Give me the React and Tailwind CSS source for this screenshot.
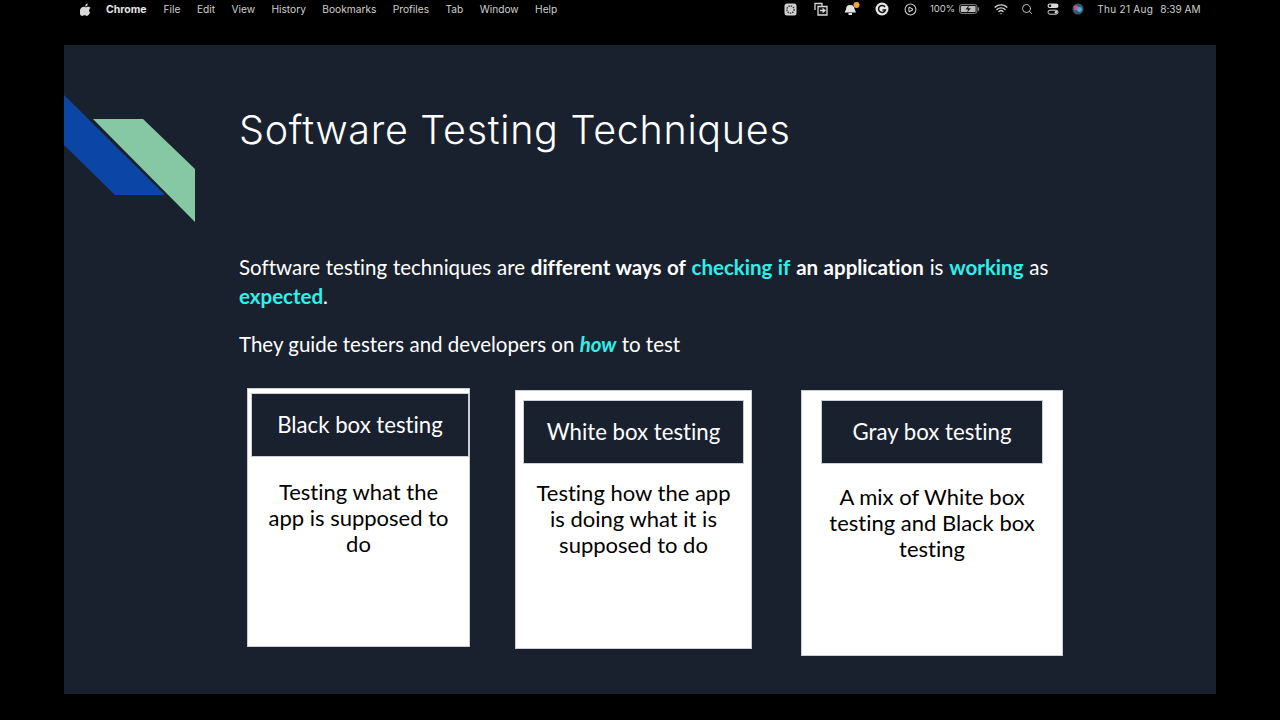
import { Search, Wifi, CirclePlay } from 'lucide-react'

const MENU = ['File', 'Edit', 'View', 'History', 'Bookmarks', 'Profiles', 'Tab', 'Window', 'Help']

const CARDS = [
  {
    title: 'Black box testing',
    text: 'Testing what the app is supposed to do',
    box: 'w-[223px] h-[259px] mt-[-2px] ml-[8px]',
    head: 'mt-[4px] ml-[3px] mr-0 h-[64px]',
    body: 'mt-[22px] px-[18px]',
  },
  {
    title: 'White box testing',
    text: 'Testing how the app is doing what it is supposed to do',
    box: 'w-[237px] h-[259px] ml-[45px]',
    head: 'mt-[9px] mx-[7px] h-[64px]',
    body: 'mt-[16px] px-[16px]',
  },
  {
    title: 'Gray box testing',
    text: 'A mix of White box testing and Black box testing',
    box: 'w-[262px] h-[266px] ml-[49px]',
    head: 'mt-[9px] mx-[19px] h-[64px]',
    body: 'mt-[20px] px-[24px]',
  },
]

function Card({ card }) {
  return (
    <div className={`bg-white border border-[#c9ced6] shrink-0 ${card.box}`}>
      <div className={`bg-[#1a212e] border border-[#c9ced6] flex items-center justify-center text-white text-[22.2px] pb-[1px] ${card.head}`}>
        {card.title}
      </div>
      <p className={`text-black text-center text-[22px] leading-[26.2px] ${card.body}`}>{card.text}</p>
    </div>
  )
}

function MenuBarIcons() {
  return (
    <div className="flex items-center text-[#cfcfcf]">
      {/* app grid */}
      <svg width="13" height="13" viewBox="0 0 13 13" className="ml-[784px]">
        <rect x="0.5" y="0.5" width="12" height="12" rx="2.5" fill="#cfcfcf" />
        <circle cx="6.5" cy="6.5" r="3.6" fill="none" stroke="#333" strokeWidth="1.4" strokeDasharray="1.4 1" />
      </svg>
      {/* window switch */}
      <svg width="14" height="14" viewBox="0 0 14 14" className="ml-[17px]" fill="none" stroke="#d8d8d8" strokeWidth="1.3">
        <path d="M1 8V1.5h7V4" />
        <path d="M4 4.5h9v8.5H4z" fill="#111" />
        <path d="M6 8.5h5M8.5 6.5l2.5 2-2.5 2" />
      </svg>
      {/* notification bell */}
      <svg width="16" height="14" viewBox="0 0 16 14" className="ml-[16px]">
        <path d="M6 3c-3 0-4 2-4 4.500L0.500 10.500h11.500L10.500 7C10.300 4.500 9 3 6 3z" fill="#e4e4e4" />
        <rect x="4.500" y="11" width="3.500" height="2" fill="#e4e4e4" />
        <circle cx="12.500" cy="3" r="3" fill="#f0a332" />
      </svg>
      {/* grammarly */}
      <svg width="14" height="14" viewBox="0 0 14 14" className="ml-[15px]">
        <circle cx="7" cy="7" r="6.500" fill="#e8e8e8" />
        <path d="M10 5a3.500 3.500 0 1 0 0.400 3H7.500" fill="none" stroke="#111" strokeWidth="1.500" />
      </svg>
      <CirclePlay size={13} strokeWidth={2} className="ml-[15px]" />
      <span className="ml-[13px] text-[9.5px] font-['Inter',sans-serif]">100%</span>
      {/* battery */}
      <svg width="21" height="10" viewBox="0 0 24 11" className="ml-[4px]">
        <rect x="0.500" y="0.500" width="20" height="10" rx="2.500" fill="none" stroke="#999" />
        <rect x="2" y="2" width="17" height="7" rx="1" fill="#bbb" />
        <rect x="21.500" y="3.500" width="1.500" height="4" rx="0.700" fill="#888" />
        <path d="M11.500 1L7.500 6h3l-1.500 4 4.500-5.500h-3z" fill="#111" />
      </svg>
      <Wifi size={14} strokeWidth={2.4} className="ml-[14px]" />
      <Search size={12} strokeWidth={1.8} className="ml-[13px]" />
      {/* control centre */}
      <svg width="12" height="12" viewBox="0 0 12 12" className="ml-[14px]">
        <rect x="0.500" y="0.500" width="11" height="4.500" rx="2.200" fill="#d8d8d8" />
        <circle cx="3" cy="2.700" r="1.300" fill="#111" />
        <rect x="1" y="7.200" width="10" height="4" rx="2" fill="none" stroke="#d8d8d8" />
        <circle cx="9" cy="9.200" r="1.300" fill="#d8d8d8" />
      </svg>
      {/* siri */}
      <svg width="12" height="12" viewBox="0 0 12 12" className="ml-[13px]">
        <circle cx="6" cy="6" r="5.500" fill="#3d5578" />
        <circle cx="4" cy="5" r="2.400" fill="#c4568c" />
        <circle cx="7.500" cy="6.500" r="2.400" fill="#49b3d6" />
      </svg>
      <span className="ml-[13px] text-[10px] tracking-[0.3px] font-['Inter',sans-serif] whitespace-nowrap">Thu 21 Aug</span>
      <span className="ml-[7px] text-[10px] font-['Inter',sans-serif] whitespace-nowrap">8:39 AM</span>
    </div>
  )
}

export default function App() {
  return (
    <div className="w-[1280px] h-[720px] bg-black overflow-hidden font-['Lato',sans-serif] [font-variant-ligatures:none]">
      {/* menu bar */}
      <div className="h-[18px] flex items-center relative text-[10.2px] text-[#cfcfcf] font-['Inter',sans-serif]">
        <div className="absolute left-[80px] top-[2px] flex items-center">
          <svg width="11" height="13" viewBox="0 0 24 28" fill="#d8d8d8">
            <path d="M17 1c.2 2-.6 3.500-1.500 4.600-1 1.200-2.500 2-4 1.900-.2-1.800.6-3.500 1.500-4.500C14 1.900 15.700 1.100 17 1zM22 20c-.7 1.600-1 2.300-1.900 3.700-1.300 1.900-3 4.300-5.200 4.300-1.900 0-2.400-1.200-5-1.200-2.600 0-3.200 1.200-5.100 1.200-2.100 0-3.700-2.100-5-4C-2.300 18.800.2 12 3.500 9.700 5 8.700 6.600 8.100 8.100 8.100c2 0 3.300 1.200 5 1.200 1.600 0 2.600-1.200 5-1.200 1.800 0 3.700 1 5 2.700-4.400 2.400-3.700 8.700-1.100 9.200z" />
          </svg>
          <span className="ml-[15px] font-bold text-[10.5px] text-[#e4e4e4]">Chrome</span>
          <div className="flex gap-[16.4px] ml-[17px]">
            {MENU.map(item => <span key={item}>{item}</span>)}
          </div>
        </div>
        <MenuBarIcons />
      </div>

      {/* slide */}
      <div className="relative mt-[27px] mx-[64px] h-[649px] bg-[#1a212e] pl-[175px]">
        <svg width="131" height="127" viewBox="0 0 131 127" className="absolute left-0 top-[50px]">
          <polygon points="0,0 0,50 51,100 101,100" fill="#0b45a6" />
          <polygon points="29,24 79,24 131,74 131,127" fill="#86c8a4" />
        </svg>

        <h1 className="pt-[59px] h-[208px] text-[39.5px] leading-[52px] text-white font-['Inter',sans-serif] font-light tracking-[0.7px]">
          Software Testing Techniques
        </h1>

        <p className="text-[20.5px] leading-[29px] text-white w-[830px] [word-spacing:0.5px]">
          Software testing techniques are <b>different ways of</b> <b className="text-[#2ef0ea]">checking if</b> <b>an application</b> is <b className="text-[#2ef0ea]">working</b> as <b className="text-[#2ef0ea]">expected</b>.
        </p>
        <p className="mt-[19px] text-[20.5px] leading-[29px] text-white">
          They guide testers and developers on <b className="italic text-[#2ef0ea]">how</b> to test
        </p>

        <div className="flex items-start mt-[31px]">
          {CARDS.map(card => <Card key={card.title} card={card} />)}
        </div>
      </div>
    </div>
  )
}
